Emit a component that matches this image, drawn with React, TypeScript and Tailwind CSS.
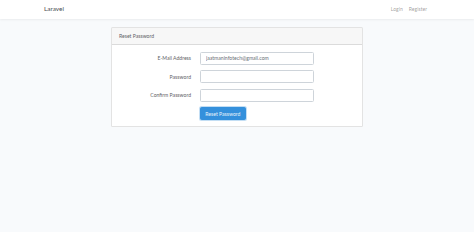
const fields = [
  { label: 'E-Mail Address', type: 'email', value: 'jaatmaninfotech@gmail.com' },
  { label: 'Password', type: 'password', value: '' },
  { label: 'Confirm Password', type: 'password', value: '' },
]

const App: React.FC = () => {
  return (
    <div className="min-h-[232px] bg-[#f8fafc] font-['Lato',sans-serif] text-[#5f6368] text-[5.1px] leading-[1.6]">
      <nav className="bg-white h-[19px] shadow-[0_1px_2px_rgba(0,0,0,0.06)] flex items-center justify-between pl-[44px] pr-[47px]">
        <a className="text-[6.4px] text-[#4a4d51]">Laravel</a>
        <div className="flex gap-[6px] text-[rgba(0,0,0,0.4)]">
          <a>Login</a>
          <a>Register</a>
        </div>
      </nav>

      <main className="pt-[8px] flex justify-center">
        <div className="w-[252px] bg-white border border-[rgba(0,0,0,0.11)] rounded-[1.5px]">
          <div className="bg-[rgba(0,0,0,0.03)] border-b border-[rgba(0,0,0,0.11)] px-[7px] h-[17px] flex items-center">
            Reset Password
          </div>
          <form className="px-[7px] pt-[7px] pb-[6px] flex flex-col gap-[5.7px]">
            {fields.map((f) => (
              <div key={f.label} className="flex items-center">
                <label className="w-[72px] text-right">{f.label}</label>
                <input
                  type={f.type}
                  defaultValue={f.value}
                  className="ml-[9px] w-[114px] h-[12.8px] pl-[5px] pr-[4px] text-[5.1px] text-[#6a7077] bg-white border border-[#ced4da] rounded-[1.5px] outline-none"
                />
              </div>
            ))}
            <div className="flex">
              <button
                type="submit"
                className="ml-[81px] h-[12.8px] px-[4.3px] bg-[#3490dc] border border-[#3490dc] text-[#eaf3fb] rounded-[1.5px] shadow-[0_0_0_1px_rgba(82,161,224,0.35)]"
              >
                Reset Password
              </button>
            </div>
          </form>
        </div>
      </main>
    </div>
  )
}

export default App
